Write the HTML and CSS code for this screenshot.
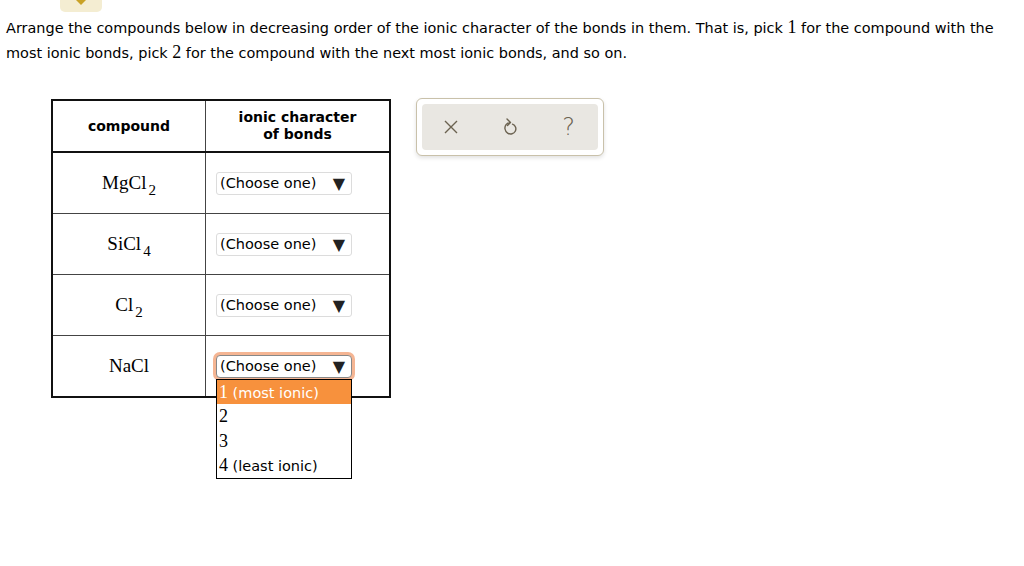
FILE: index.html
```html
<!DOCTYPE html>
<html>
<head>
<meta charset="utf-8">
<link rel="stylesheet" href="styles.css">
</head>
<body>
<div class="tab"><svg width="14" height="8" viewBox="0 0 14 8"><path d="M2 0 L12 0 L7 5 Z" fill="#c9a227"/></svg></div>
<p class="prompt">Arrange the compounds below in decreasing order of the ionic character of the bonds in them. That is, pick <span class="num">1</span> for the compound with the most ionic bonds, pick <span class="num">2</span> for the compound with the next most ionic bonds, and so on.</p>
<div class="work">
  <table class="grid">
    <thead>
      <tr><th class="c1">compound</th><th class="c2">ionic character<br>of bonds</th></tr>
    </thead>
    <tbody>
      <tr><td class="formula">MgCl<sub>2</sub></td><td><div class="sel"><span>(Choose one)</span><span class="arr">▼</span></div></td></tr>
      <tr><td class="formula">SiCl<sub>4</sub></td><td><div class="sel"><span>(Choose one)</span><span class="arr">▼</span></div></td></tr>
      <tr><td class="formula">Cl<sub>2</sub></td><td><div class="sel"><span>(Choose one)</span><span class="arr">▼</span></div></td></tr>
      <tr><td class="formula">NaCl</td><td>
        <div class="selwrap">
          <div class="sel focus"><span>(Choose one)</span><span class="arr">▼</span></div>
          <ul class="menu">
            <li class="hi"><span class="num">1</span> (most ionic)</li>
            <li><span class="num">2</span></li>
            <li><span class="num">3</span></li>
            <li><span class="num">4</span> (least ionic)</li>
          </ul>
        </div>
      </td></tr>
    </tbody>
  </table>
  <div class="tools">
    <div class="toolbar">
      <svg width="14" height="14" viewBox="0 0 14 14"><path d="M1 1 L13 13 M13 1 L1 13" stroke="#6b6250" stroke-width="1.4" fill="none"/></svg>
      <svg width="14" height="18" viewBox="0 0 14 18"><path d="M4 1 L7.5 4.5 L4.5 7.5 M7.5 4.5 C3.5 4.5 1.5 8 2 11 C2.6 14.6 6 16.6 9 15.8 C12 15 13.5 12 12.6 9.2 C12 7.6 10.8 6.6 9.5 6.2" stroke="#6b6250" stroke-width="1.4" fill="none" stroke-linejoin="round" stroke-linecap="round"/></svg>
      <span class="q">?</span>
    </div>
  </div>
</div>
</body>
</html>
```
FILE: styles.css
```css
html, body { margin: 0; padding: 0; background: #fff; }
body {
  font-family: "DejaVu Sans", Verdana, sans-serif;
  color: #000;
  position: relative;
  padding: 0 6px;
  min-height: 566px;
  box-sizing: border-box;
}
.tab {
  position: absolute;
  left: 60px;
  top: 0;
  width: 42px;
  height: 12px;
  background: #f4edd2;
  border-radius: 0 0 5px 5px;
  display: flex;
  justify-content: center;
  align-items: flex-start;
}
.prompt {
  margin: 0;
  padding-top: 15px;
  font-size: 14.45px;
  line-height: 24px;
  width: 1000px;
}
.prompt .num, .menu .num {
  font-family: "Liberation Serif", "Times New Roman", serif;
  font-size: 18px;
}
.work {
  display: flex;
  align-items: flex-start;
  margin-top: 34px;
  margin-left: 45px;
  gap: 25px;
}
.grid {
  border-collapse: collapse;
  border: 2px solid #111;
}
.grid th {
  font-size: 14px;
  font-weight: bold;
  height: 50px;
  padding: 0;
  border-bottom: 2px solid #111;
  line-height: 17px;
}
.grid th.c1 { width: 152px; border-right: 1px solid #444; }
.grid th.c2 { width: 183px; }
.grid td {
  height: 60px;
  padding: 0;
  border-top: 1px solid #444;
  vertical-align: middle;
}
.grid tbody tr:first-child td { border-top: none; }
.grid td.formula {
  text-align: center;
  font-family: "Liberation Serif", "Times New Roman", serif;
  font-size: 19px;
  border-right: 1px solid #444;
}
.formula sub { font-size: 15px; vertical-align: -6px; line-height: 0; margin-left: 2px; }
.sel {
  margin-left: 10px;
  width: 136px;
  height: 23px;
  box-sizing: border-box;
  border: 1px solid #dcdcdc;
  border-radius: 3px;
  display: flex;
  align-items: center;
  justify-content: space-between;
  padding: 0 6px 0 3px;
  font-size: 14.5px;
  background: #fff;
}
.sel .arr { font-size: 16px; color: #222; }
.selwrap { position: relative; }
.sel.focus {
  border-color: #888;
  box-shadow: 0 0 0 3px #f5b593;
  border-radius: 4px;
}
.menu {
  position: absolute;
  left: 10px;
  top: 24px;
  width: 136px;
  box-sizing: border-box;
  margin: 0;
  padding: 0;
  list-style: none;
  border: 1px solid #000;
  background: #fff;
  z-index: 2;
  font-size: 14.5px;
}
.menu li {
  height: 24.5px;
  line-height: 24px;
  padding-left: 2px;
}
.menu li.hi { background: #f7913d; color: #fff; }
.tools {
  border: 1px solid #c9c1aa;
  border-radius: 6px;
  padding: 5px;
  box-shadow: 0 2px 4px rgba(0,0,0,0.12);
  background: #fff;
  margin-top: -1px;
}
.toolbar {
  width: 176px;
  height: 46px;
  background: #e9e7e2;
  border-radius: 4px;
  display: grid;
  grid-template-columns: 1fr 1fr 1fr;
  align-items: center;
  justify-items: center;
  color: #6b6250;
}
.q { font-size: 24px; color: #6b6250; font-family: "DejaVu Sans", sans-serif; font-weight: 300; line-height: 1; }
```
